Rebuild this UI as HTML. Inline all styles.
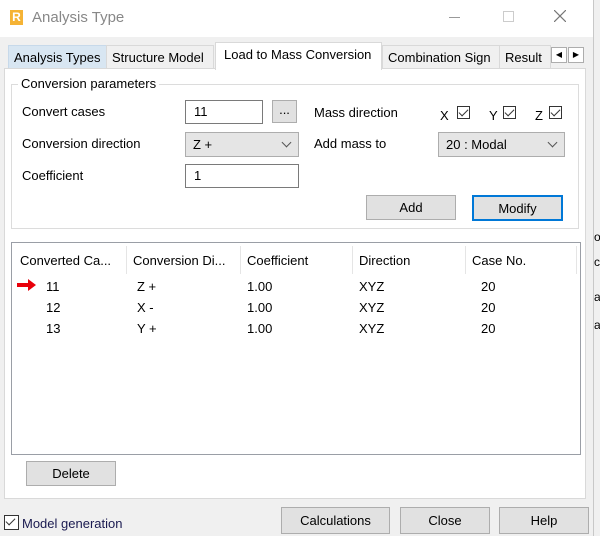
<!DOCTYPE html>
<html><head><meta charset="utf-8"><style>
*{box-sizing:border-box;margin:0;padding:0}
body{width:600px;height:536px;overflow:hidden;background:#f0f0f0;font-family:"Liberation Sans",Tahoma,sans-serif;font-size:13px;color:#000;position:relative}
.a{position:absolute;white-space:nowrap}
.btn{position:absolute;background:#e1e1e1;border:1px solid #adadad;text-align:center}
.in{position:absolute;background:#fff;border:1px solid #7a7a7a;padding-left:8px}
.cb{position:absolute;width:13px;height:13px;border:1px solid #333;background:#fff}
.cb:after{content:"";position:absolute;left:3px;top:0px;width:4px;height:8px;border:solid #333;border-width:0 1.5px 1.5px 0;transform:rotate(45deg)}
.dd{position:absolute;background:#e5e5e5;border:1px solid #adadad;padding-left:7px}
.dd:after{content:"";position:absolute;right:8px;top:6px;width:6px;height:6px;border:solid #555;border-width:0 1px 1px 0;transform:rotate(45deg)}
.tab{position:absolute;top:45px;height:23px;border:1px solid #d9d9d9;border-bottom:none;background:#f0f0f0;padding:4px 5px 0 5px}
</style></head><body>
<div class="a" style="left:0;top:0;width:593px;height:37px;background:#fff"></div>
<div class="a" style="left:10px;top:10px;width:13px;height:15px;background:#f5b335;color:#fff;font-weight:bold;font-size:12px;text-align:center;line-height:15px">R</div>
<div class="a" style="left:32px;top:9px;font-size:15px;color:#888">Analysis Type</div>
<div class="a" style="left:449px;top:17px;width:11px;height:1px;background:#999"></div>
<div class="a" style="left:503px;top:11px;width:11px;height:11px;border:1px solid #ccc"></div>
<svg class="a" style="left:554px;top:10px" width="12" height="12"><path d="M0 0L12 12M12 0L0 12" stroke="#777" stroke-width="1.2"/></svg>
<div class="a" style="left:593px;top:0;width:7px;height:536px;background:#f0f0f0;border-left:1px solid #c8c8c8"></div>
<div class="a" style="left:594px;top:230px;font-size:12px">o</div>
<div class="a" style="left:594px;top:255px;font-size:12px">c</div>
<div class="a" style="left:594px;top:290px;font-size:12px">a</div>
<div class="a" style="left:594px;top:318px;font-size:12px">a</div>
<div class="a" style="left:4px;top:68px;width:582px;height:431px;background:#fff;border:1px solid #d9d9d9"></div>
<div class="tab" style="left:8px;width:99px;background:#d8e6f2;border-color:#c7d9ea">Analysis Types</div>
<div class="tab" style="left:106px;width:108px">Structure Model</div>
<div class="a" style="left:215px;top:42px;width:167px;height:28px;background:#fff;border:1px solid #d9d9d9;border-bottom:none;padding:4px 0 0 8px">Load to Mass Conversion</div>
<div class="tab" style="left:382px;width:118px">Combination Sign</div>
<div class="tab" style="left:499px;width:52px;overflow:hidden">Result I</div>
<div class="a" style="left:551px;top:47px;width:16px;height:16px;background:#fff;border:1px solid #adadad;font-size:8px;text-align:center;line-height:14px">◀</div>
<div class="a" style="left:568px;top:47px;width:16px;height:16px;background:#fff;border:1px solid #adadad;font-size:8px;text-align:center;line-height:14px">▶</div>
<div class="a" style="left:11px;top:84px;width:568px;height:145px;border:1px solid #dcdcdc"></div>
<div class="a" style="left:18px;top:76px;background:#fff;padding:0 3px">Conversion parameters</div>
<div class="a" style="left:22px;top:104px">Convert cases</div>
<div class="in" style="left:185px;top:100px;width:78px;height:24px;line-height:22px">11</div>
<div class="btn" style="left:272px;top:100px;width:25px;height:23px;line-height:18px">...</div>
<div class="a" style="left:22px;top:136px">Conversion direction</div>
<div class="dd" style="left:185px;top:132px;width:114px;height:25px;line-height:23px">Z +</div>
<div class="a" style="left:22px;top:168px">Coefficient</div>
<div class="in" style="left:185px;top:164px;width:114px;height:24px;line-height:22px">1</div>
<div class="a" style="left:314px;top:105px">Mass direction</div>
<div class="a" style="left:440px;top:108px">X</div><div class="cb" style="left:457px;top:106px"></div>
<div class="a" style="left:489px;top:108px">Y</div><div class="cb" style="left:503px;top:106px"></div>
<div class="a" style="left:535px;top:108px">Z</div><div class="cb" style="left:549px;top:106px"></div>
<div class="a" style="left:314px;top:136px">Add mass to</div>
<div class="dd" style="left:438px;top:132px;width:127px;height:25px;line-height:23px">20 : Modal</div>
<div class="btn" style="left:366px;top:195px;width:90px;height:25px;line-height:23px">Add</div>
<div class="btn" style="left:472px;top:195px;width:91px;height:26px;line-height:23px;border:2px solid #0078d7">Modify</div>
<div class="a" style="left:11px;top:242px;width:570px;height:213px;background:#fff;border:1px solid #9a9ea6"></div>
<div class="a" style="left:20px;top:253px">Converted Ca...</div>
<div class="a" style="left:126px;top:246px;width:1px;height:28px;background:#e5e5e5"></div>
<div class="a" style="left:133px;top:253px">Conversion Di...</div>
<div class="a" style="left:240px;top:246px;width:1px;height:28px;background:#e5e5e5"></div>
<div class="a" style="left:247px;top:253px">Coefficient</div>
<div class="a" style="left:352px;top:246px;width:1px;height:28px;background:#e5e5e5"></div>
<div class="a" style="left:359px;top:253px">Direction</div>
<div class="a" style="left:465px;top:246px;width:1px;height:28px;background:#e5e5e5"></div>
<div class="a" style="left:472px;top:253px">Case No.</div>
<div class="a" style="left:576px;top:246px;width:1px;height:28px;background:#e5e5e5"></div>
<svg class="a" style="left:17px;top:279px" width="20" height="12"><path d="M0 4h11V0l8 6-8 6V8H0z" fill="#e8000a"/></svg>
<div class="a" style="left:46px;top:279px">11</div><div class="a" style="left:137px;top:279px">Z +</div><div class="a" style="left:247px;top:279px">1.00</div><div class="a" style="left:359px;top:279px">XYZ</div><div class="a" style="left:481px;top:279px">20</div>
<div class="a" style="left:46px;top:300px">12</div><div class="a" style="left:137px;top:300px">X -</div><div class="a" style="left:247px;top:300px">1.00</div><div class="a" style="left:359px;top:300px">XYZ</div><div class="a" style="left:481px;top:300px">20</div>
<div class="a" style="left:46px;top:321px">13</div><div class="a" style="left:137px;top:321px">Y +</div><div class="a" style="left:247px;top:321px">1.00</div><div class="a" style="left:359px;top:321px">XYZ</div><div class="a" style="left:481px;top:321px">20</div>
<div class="btn" style="left:26px;top:461px;width:90px;height:25px;line-height:23px">Delete</div>
<div class="cb" style="left:4px;top:515px;width:15px;height:15px"></div>
<div class="a" style="left:22px;top:516px;color:#1a1a50">Model generation</div>
<div class="btn" style="left:281px;top:507px;width:109px;height:27px;line-height:25px">Calculations</div>
<div class="btn" style="left:400px;top:507px;width:90px;height:27px;line-height:25px">Close</div>
<div class="btn" style="left:499px;top:507px;width:90px;height:27px;line-height:25px">Help</div>
</body></html>
